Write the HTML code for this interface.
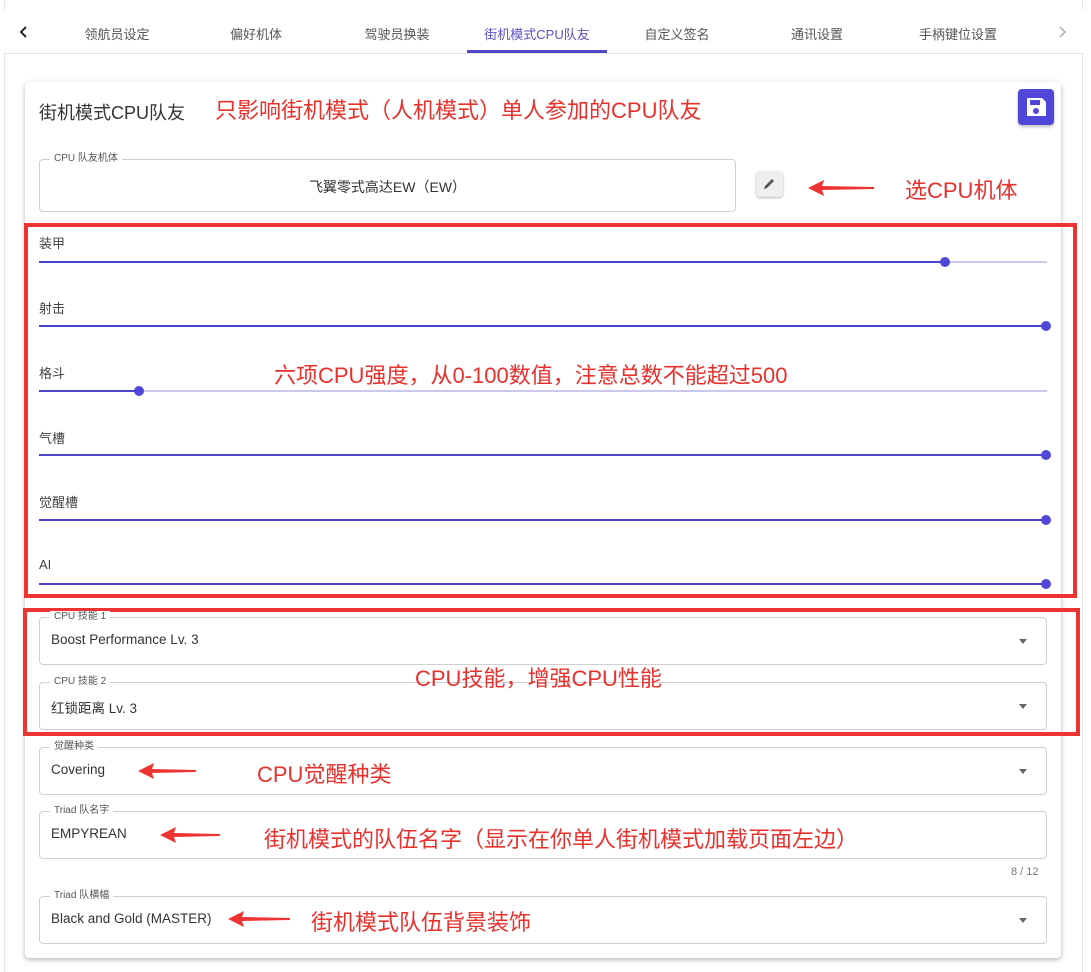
<!DOCTYPE html>
<html><head><meta charset="utf-8"><style>
*{box-sizing:border-box;margin:0;padding:0}
body{width:1091px;height:972px;background:#fff;position:relative;overflow:hidden;font-family:"Liberation Sans","Noto Sans CJK SC",sans-serif;color:#333}
.a{position:absolute}
.tab{position:absolute;top:24px;font-size:13px;color:#555;text-align:center;width:140px}
.card{left:25px;top:82px;width:1036px;height:876px;background:#fff;border-radius:4px;box-shadow:0 2px 4px rgba(0,0,0,.22),0 1px 8px rgba(0,0,0,.08)}
.lbl{font-size:13px;color:#444;left:39px}
.track{left:39px;width:1008px;height:2px;background:#cbc8ee}
.fill{position:absolute;left:0;top:0;height:2px;background:#4b44c9}
.th{position:absolute;top:-4px;width:10px;height:10px;border-radius:50%;background:#5048d8;margin-left:-5px}
.fld{left:39px;width:1008px;border:1px solid #cfcfcf;border-radius:4px;font-size:13.5px;color:#333}
.fl{position:absolute;top:-7px;left:10px;background:#fff;padding:0 4px;font-size:10px;color:#555;line-height:12px}
.fv{position:absolute;left:11px;top:14px}
.dd{position:absolute;right:19px;top:21px;width:0;height:0;border-left:4px solid transparent;border-right:4px solid transparent;border-top:5px solid #666}
.red{color:#e8302c;font-size:22px;white-space:nowrap}
.box{border:4px solid #ee3333}
</style></head><body>
<div class="a" style="left:4px;top:0;width:1079px;height:972px;border-left:1px solid #e6e6e6;border-right:1px solid #e6e6e6"></div>
<div class="a" style="left:4px;top:10px;width:1079px;height:44px;border-bottom:1px solid #e2e2e2;background:#fff"></div>
<svg class="a" style="left:19px;top:25px" width="10" height="14"><path d="M7 2L2 7l5 5" stroke="#222" stroke-width="2" fill="none"/></svg>
<svg class="a" style="left:1057px;top:25px" width="10" height="14"><path d="M3 2l5 5-5 5" stroke="#aaa" stroke-width="1.5" fill="none"/></svg>
<div class="tab" style="left:47px">领航员设定</div>
<div class="tab" style="left:186px">偏好机体</div>
<div class="tab" style="left:327px">驾驶员换装</div>
<div class="tab" style="left:467px;color:#5a50c8">街机模式CPU队友</div>
<div class="a" style="left:467px;top:50px;width:140px;height:3px;background:#5048c8"></div>
<div class="tab" style="left:607px">自定义签名</div>
<div class="tab" style="left:747px">通讯设置</div>
<div class="tab" style="left:888px">手柄键位设置</div>

<div class="a card"></div>
<div class="a" style="left:39px;top:99px;font-size:18px;color:#333">街机模式CPU队友</div>
<div class="a red" style="left:215px;top:93px">只影响街机模式（人机模式）单人参加的CPU队友</div>
<div class="a" style="left:1018px;top:89px;width:36px;height:36px;background:#5046d9;border-radius:4px;box-shadow:0 2px 3px rgba(0,0,0,.25)">
<svg width="36" height="36" viewBox="0 0 36 36"><path d="M9 9h15l4 4v14H9z" fill="#fff"/><rect x="12" y="11" width="10" height="5" fill="#5046d9"/><circle cx="18" cy="22" r="3" fill="#5046d9"/></svg></div>

<div class="a fld" style="top:159px;width:697px;height:53px"><div class="fl">CPU 队友机体</div><div style="position:absolute;top:17px;width:100%;text-align:center;font-size:14px">飞翼零式高达EW（EW）</div></div>
<div class="a" style="left:756px;top:171px;width:27px;height:26px;background:#eee;border-radius:4px;box-shadow:0 1px 2px rgba(0,0,0,.3)"><svg width="27" height="26" viewBox="0 0 27 26"><path d="M8 18l1-3 7-7 2 2-7 7z" fill="#555"/></svg></div>
<svg class="a" style="left:808px;top:179px" width="68" height="18"><polygon points="0,9 16,1 14,7 66,8 66,10 14,11 16,17" fill="#ee3333"/></svg>
<div class="a red" style="left:905px;top:173px">选CPU机体</div>

<div class="a box" style="left:24px;top:223px;width:1053px;height:375px"></div>
<div class="a lbl" style="top:233px">装甲</div><div class="a track" style="top:261px"><div class="fill" style="width:906px"></div><div class="th" style="left:906px"></div></div>
<div class="a lbl" style="top:298px">射击</div><div class="a track" style="top:325px"><div class="fill" style="width:1008px"></div><div class="th" style="left:1007px"></div></div>
<div class="a lbl" style="top:363px">格斗</div><div class="a track" style="top:390px"><div class="fill" style="width:100px"></div><div class="th" style="left:100px"></div></div>
<div class="a lbl" style="top:428px">气槽</div><div class="a track" style="top:454px"><div class="fill" style="width:1008px"></div><div class="th" style="left:1007px"></div></div>
<div class="a lbl" style="top:492px">觉醒槽</div><div class="a track" style="top:519px"><div class="fill" style="width:1008px"></div><div class="th" style="left:1007px"></div></div>
<div class="a lbl" style="top:557px">AI</div><div class="a track" style="top:583px"><div class="fill" style="width:1008px"></div><div class="th" style="left:1007px"></div></div>
<div class="a red" style="left:274px;top:358px">六项CPU强度，从0-100数值，注意总数不能超过500</div>

<div class="a box" style="left:23px;top:608px;width:1057px;height:128px"></div>
<div class="a fld" style="top:617px;height:48px"><div class="fl">CPU 技能 1</div><div class="fv">Boost Performance Lv. 3</div><div class="dd"></div></div>
<div class="a fld" style="top:682px;height:48px"><div class="fl">CPU 技能 2</div><div class="fv">红锁距离 Lv. 3</div><div class="dd"></div></div>
<div class="a red" style="left:415px;top:661px">CPU技能，增强CPU性能</div>

<div class="a fld" style="top:747px;height:48px"><div class="fl">觉醒种类</div><div class="fv">Covering</div><div class="dd"></div></div>
<svg class="a" style="left:138px;top:762px" width="60" height="18"><polygon points="0,9 16,1 14,7 58,8 58,10 14,11 16,17" fill="#ee3333"/></svg>
<div class="a red" style="left:257px;top:757px">CPU觉醒种类</div>

<div class="a fld" style="top:811px;height:48px"><div class="fl">Triad 队名字</div><div class="fv">EMPYREAN</div></div>
<svg class="a" style="left:160px;top:826px" width="62" height="18"><polygon points="0,9 16,1 14,7 60,8 60,10 14,11 16,17" fill="#ee3333"/></svg>
<div class="a red" style="left:264px;top:822px">街机模式的队伍名字（显示在你单人街机模式加载页面左边）</div>
<div class="a" style="left:1011px;top:866px;font-size:11px;color:#777">8 / 12</div>

<div class="a fld" style="top:896px;height:48px"><div class="fl">Triad 队横幅</div><div class="fv">Black and Gold (MASTER)</div><div class="dd"></div></div>
<svg class="a" style="left:228px;top:910px" width="64" height="18"><polygon points="0,9 16,1 14,7 62,8 62,10 14,11 16,17" fill="#ee3333"/></svg>
<div class="a red" style="left:311px;top:905px">街机模式队伍背景装饰</div>
</body></html>
